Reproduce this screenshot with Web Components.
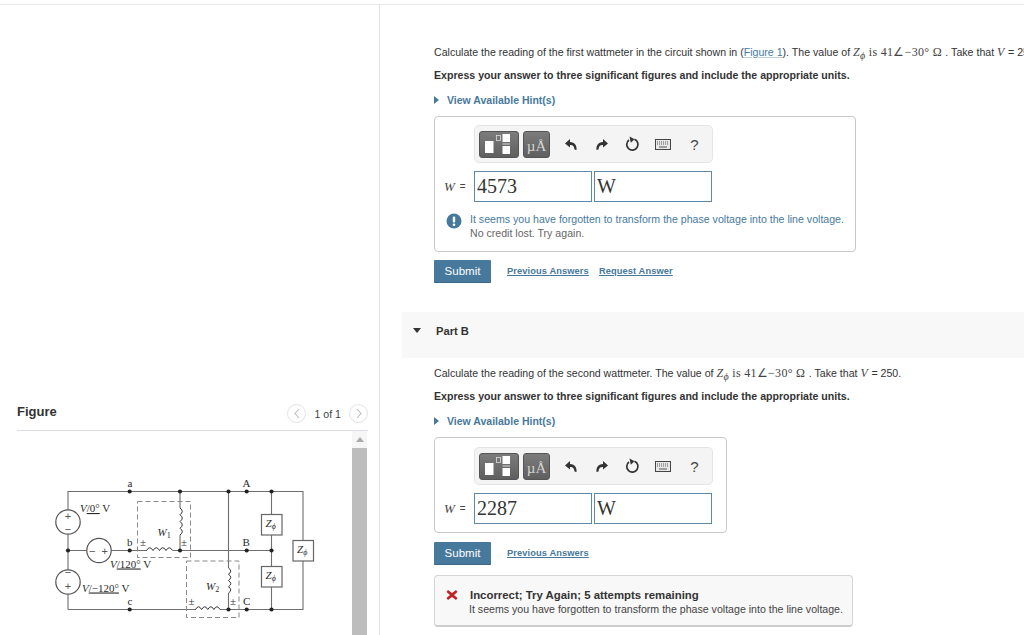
<!doctype html>
<html>
<head>
<meta charset="utf-8">
<style>
  html, body { margin: 0; height: 635px; overflow: hidden; background: #fff; }
  body { font-family: "Liberation Sans", Arial, sans-serif; font-size: 10.6px; color: #333; }
</style>
</head>
<body>
<mastering-page>
  <figure-pane slot="figure"><circuit-diagram></circuit-diagram></figure-pane>

  <question-line slot="parts">Calculate the reading of the first wattmeter in the circuit shown in (<a href="#">Figure 1</a>). The value of <math-text><i>Z<sub>ϕ</sub></i> is 41∠−30° Ω</math-text>. Take that <math-text><i>V</i></math-text> = 250.</question-line>
  <question-line slot="parts" bold>Express your answer to three significant figures and include the appropriate units.</question-line>
  <hint-toggle slot="parts"></hint-toggle>
  <answer-box slot="parts" value="4573" unit="W" style="width:422px;height:136px">
    <warning-note>
      <span slot="title">It seems you have forgotten to transform the phase voltage into the line voltage.</span>
      No credit lost. Try again.
    </warning-note>
  </answer-box>
  <submit-row slot="parts" request style="margin-top:8px"></submit-row>

  <part-header slot="parts">Part B</part-header>
  <question-line slot="parts" style="margin-top:4px">Calculate the reading of the second wattmeter. The value of <math-text><i>Z<sub>ϕ</sub></i> is 41∠−30° Ω</math-text>. Take that <math-text><i>V</i></math-text> = 250.</question-line>
  <question-line slot="parts" bold>Express your answer to three significant figures and include the appropriate units.</question-line>
  <hint-toggle slot="parts"></hint-toggle>
  <answer-box slot="parts" value="2287" unit="W" style="width:293px;height:96px;padding-top:9px"></answer-box>
  <submit-row slot="parts" style="margin-top:9px"></submit-row>
  <incorrect-note slot="parts" style="margin-top:10px">
    <span slot="title">Incorrect; Try Again; 5 attempts remaining</span>
    It seems you have forgotten to transform the phase voltage into the line voltage.
  </incorrect-note>
</mastering-page>

<script>
const BLUE = "#47799d";

// small helper so every element below stays a few lines long
function define(name, html) {
  customElements.define(name, class extends HTMLElement {
    constructor() {
      super();
      this.attachShadow({ mode: "open" });
      this.shadowRoot.innerHTML = typeof html === "function" ? html(this) : html;
    }
  });
}

define("mastering-page", `
  <style>
    :host { display: flex; height: 630px; margin-top: 4px; border-top: 1px solid #e8e8e8; overflow: hidden; }
    .left { flex: 0 0 379px; border-right: 1px solid #dfe3e8; }
    .right { flex: 1; min-width: 0; padding-top: 36px; overflow: hidden; }
    ::slotted(question-line), ::slotted(hint-toggle), ::slotted(answer-box),
    ::slotted(submit-row), ::slotted(incorrect-note) { margin-left: 54px; }
  </style>
  <div class="left"><slot name="figure"></slot></div>
  <div class="right"><slot name="parts"></slot></div>
`);

define("figure-pane", `
  <style>
    :host { display: block; padding: 394px 11px 0 17px; overflow: hidden; }
    header { display: flex; align-items: center; height: 32px; border-bottom: 1px solid #d9dde2; box-sizing: border-box; }
    h2 { flex: 1; margin: 0; font-size: 13px; font-weight: bold; color: #333; position: relative; top: -3px; }
    .pager { display: flex; align-items: center; gap: 8px; font-size: 10.600px; color: #444; position: relative; top: -1px; }
    .round { width: 19px; height: 19px; border: 1px solid #e3e3e3; border-radius: 50%; box-sizing: border-box; display: grid; place-items: center; }
    .body { display: flex; height: 205px; }
    .canvas { flex: 1; min-width: 0; }
    .track { width: 15px; margin-right: 1px; background: #f4f4f4; display: flex; flex-direction: column; }
    .up { height: 17px; display: grid; place-items: center; background: #f6f6f6; }
    .up i { border: 4px solid transparent; border-top: 0; border-bottom: 5px solid #aaa; }
    .thumb { flex: 1; background: #bdbdbd; }
  </style>
  <header>
    <h2>Figure</h2>
    <div class="pager">
      <span class="round"><svg width="8" height="11" viewBox="0 0 8 11"><path d="M6 1L2 5.500 6 10" fill="none" stroke="#bbb" stroke-width="1.100"/></svg></span>
      <span>1 of 1</span>
      <span class="round"><svg width="8" height="11" viewBox="0 0 8 11"><path d="M2 1l4 4.500L2 10" fill="none" stroke="#bbb" stroke-width="1.100"/></svg></span>
    </div>
  </header>
  <div class="body">
    <div class="canvas"><slot></slot></div>
    <div class="track"><div class="up"><i></i></div><div class="thumb"></div></div>
  </div>
`);

// coil made of n small humps, drawn along +x or +y
function coil(x, y, len, n, vertical) {
  const s = len / n;
  let d = `M${x} ${y}`;
  for (let i = 0; i < n; i++) {
    d += vertical ? `q4.500 ${s / 2} 0 ${s}` : `q${s / 2} -5.500 ${s} 0`;
  }
  return `<path d="${d}" class="coil"/>`;
}

function dots(list) {
  return list.map(([x, y]) => `<circle cx="${x}" cy="${y}" r="2.100" fill="#222"/>`).join("");
}

function zbox(x, y) {
  return `<rect x="${x}" y="${y}" width="20.500" height="20.500" fill="#fff" stroke="#666" stroke-width="1.200"/>
    <text x="${x + 4}" y="${y + 12}" class="it" font-size="12">Z<tspan font-size="8" dy="2">ϕ</tspan></text>`;
}

define("circuit-diagram", () => `
  <style>
    :host { display: block; }
    svg { display: block; margin-left: -17px; }
    .w { fill: none; stroke: #6e6e6e; stroke-width: 1.100; }
    .dash { fill: none; stroke: #888; stroke-width: 1; stroke-dasharray: 5 3; }
    .coil { fill: none; stroke: #333; stroke-width: 1; }
    text { font-family: "Liberation Serif", "Times New Roman", serif; font-size: 11px; fill: #2b2b2b; }
    .it { font-style: italic; }
    .u { text-decoration: underline; }
    .src { fill: #fff; stroke: #555; stroke-width: 1.200; }
    .sym { font-family: "Liberation Sans", sans-serif; font-size: 11px; fill: #555; }
  </style>
  <svg width="352" height="205" viewBox="0 431 352 205">
    <path class="w" d="M68 609.500V491.500H303V609.500H68M68 550.500H271.500M180 491.500V508M180 535V550.500M228.500 491.500V568M228.500 593V609.500M271.500 491.500V609.500"/>
    <path class="dash" d="M137.500 501.500H190.500V557.500H137.500Z"/>
    <path class="dash" d="M186.500 561H239V617.500H186.500Z"/>
    <circle class="src" cx="68" cy="522" r="12.200"/>
    <circle class="src" cx="99" cy="550.500" r="12.200"/>
    <circle class="src" cx="68" cy="582" r="12.200"/>
    <text class="sym" x="64.800" y="519.500">+</text><text class="sym" x="64.800" y="533">−</text>
    <text class="sym" x="89" y="554.500">−</text><text class="sym" x="101.500" y="554.500">+</text>
    <text class="sym" x="64.800" y="576">−</text><text class="sym" x="64.800" y="589.500">+</text>
    <rect x="147" y="547" width="26" height="7" fill="#fff"/>
    <rect x="196" y="605" width="24" height="7" fill="#fff"/>
    ${coil(146.500, 550.500, 26, 4, false)}
    ${coil(195.500, 609.500, 24.500, 4, false)}
    ${coil(180, 508, 27, 4, true)}
    ${coil(228.500, 568, 25, 4, true)}
    ${dots([[129.700, 491.500], [180, 491.500], [228.500, 491.500], [246.700, 491.500], [271.500, 491.500],
            [68, 550.500], [129.700, 550.500], [180, 550.500], [246.700, 550.500], [271.500, 550.500],
            [129.700, 609.500], [228.500, 609.500], [246.700, 609.500], [271.500, 609.500]])}
    ${zbox(261.500, 514.500)}${zbox(261.500, 566.500)}${zbox(293, 540.500)}
    <text x="127.500" y="487">a</text><text x="242.500" y="487" font-size="12">A</text>
    <text x="127" y="546">b</text><text x="242.500" y="546" font-size="12">B</text>
    <text x="127.500" y="605">c</text><text x="243" y="605" font-size="12">C</text>
    <text x="80" y="512"><tspan class="it">V</tspan><tspan class="u">/0°</tspan> V</text>
    <text x="110" y="567.500"><tspan class="it">V</tspan><tspan class="u">/120°</tspan> V</text>
    <text x="82" y="591.500"><tspan class="it">V</tspan><tspan class="u">/−120°</tspan> V</text>
    <text x="157.500" y="536" class="it">W<tspan font-size="8" dy="2" font-style="normal">1</tspan></text>
    <text x="206" y="590" class="it">W<tspan font-size="8" dy="2" font-style="normal">2</tspan></text>
    <text x="140" y="546" font-size="12">±</text><text x="181" y="546" font-size="12">±</text>
    <text x="188.500" y="605" font-size="12">±</text><text x="230" y="605" font-size="12">±</text>
  </svg>
`);

define("question-line", (el) => `
  <style>
    :host { display: block; height: 23px; line-height: 23px; white-space: nowrap; color: #333; font-weight: ${el.hasAttribute("bold") ? "bold" : "normal"}; }
    ::slotted(a) { color: #3f7ba5; text-decoration: underline; text-decoration-color: #b9d0e0; }
  </style>
  <slot></slot>
`);

define("math-text", `
  <style>
    :host { font-family: "Liberation Serif", "Times New Roman", serif; font-size: 12px; color: #444; letter-spacing: .3px; }
    ::slotted(i) { font-size: 12px; }
  </style>
  <slot></slot>
`);

define("hint-toggle", `
  <style>
    :host { display: flex; align-items: center; gap: 8px; height: 20px; margin-top: 3px; margin-bottom: 6px; color: ${BLUE}; font-weight: bold; font-size: 10.500px; }
    i { border: 4px solid transparent; border-left: 5px solid ${BLUE}; border-right: 0; }
  </style>
  <i></i><span>View Available Hint(s)</span>
`);

define("math-toolbar", `
  <style>
    :host { display: flex; align-items: center; width: 239px; height: 38px; box-sizing: border-box; background: #f4f4f4; border: 1px solid #e4e4e4; border-radius: 5px; padding-left: 4px; }
    .b { height: 27px; box-sizing: border-box; border: 1px solid #555; border-radius: 3px; background: linear-gradient(#7c7c7c, #5f5f5f); display: grid; place-items: center; }
    .t { width: 40px; margin-right: 4px; }
    .m { width: 27px; color: #d4d4d4; font: 15px/15px "Liberation Serif", serif; padding-top: 4px; }
    .tools { display: flex; align-items: center; color: #333; margin-left: 5px; }
    .tools > * { flex: 0 0 31px; display: grid; place-items: center; }
    .q { font: 15px "Liberation Sans", sans-serif; color: #444; }
  </style>
  <div class="b t"><svg width="32" height="22" viewBox="0 0 32 22">
    <rect x="2" y="8" width="8.500" height="12" fill="#fff"/>
    <rect x="13.500" y="2.500" width="4" height="5" fill="none" stroke="#ddd" stroke-width=".8"/>
    <rect x="19.500" y="1" width="7.500" height="8" fill="#fff"/>
    <rect x="19.500" y="10.500" width="7.500" height="1" fill="#ddd"/>
    <rect x="19.500" y="13" width="7.500" height="8" fill="#fff"/>
  </svg></div>
  <div class="b m"><span>µÅ</span></div>
  <div class="tools">
    <span><svg width="14" height="13" viewBox="0 0 14 13"><path d="M6 1L1 5.500 6 9.500V7c2.500-.3 4 .5 4.500 4.500L12.500 12c.5-4-1.500-8-6.500-8z" fill="#333"/></svg></span>
    <span><svg width="14" height="13" viewBox="0 0 14 13"><path d="M8 1L13 5.500 8 9.500V7C5.500 6.700 4 7.500 3.500 11.500L1.500 12C1 8 3 4 8 4z" fill="#333"/></svg></span>
    <span><svg width="15" height="16" viewBox="0 0 15 16"><path d="M9.500 3.300A5.600 5.600 0 1 1 4 4" fill="none" stroke="#333" stroke-width="1.700"/><path d="M4.500 .5L9.500 3.300 5.800 6.800z" fill="#333"/></svg></span>
    <span style="position:relative;left:-1px"><svg width="16" height="11" viewBox="0 0 16 11"><rect x=".5" y=".5" width="15" height="10" fill="#e8e8e8" stroke="#444"/><path d="M2 3h12M2 5h12" stroke="#555" stroke-dasharray="1 1"/><path d="M4 8h8" stroke="#555"/></svg></span>
    <span class="q">?</span>
  </div>
`);

define("answer-box", (el) => `
  <style>
    :host { display: block; box-sizing: border-box; border: 1px solid #c9c9c9; border-radius: 4px; padding: 8px 0 0 39px; }
    .row { display: flex; margin: 8px 0 0 -30px; align-items: stretch; }
    .label { width: 30px; font: 13px "Liberation Serif", serif; color: #444; display: flex; align-items: center; gap: 5px; }
    .input { width: 118px; height: 31px; box-sizing: border-box; border: 1px solid #5a8aa8; background: #fff; font: 20px/29px "Liberation Serif", serif; color: #333; padding-left: 2px; }
    .input + .input { margin-left: 2px; }
    .foot { margin-left: -30px; }
  </style>
  <math-toolbar></math-toolbar>
  <div class="row">
    <span class="label"><i>W</i><span style="font-family:'Liberation Sans';font-size:10px">=</span></span>
    <span class="input">${el.getAttribute("value")}</span>
    <span class="input">${el.getAttribute("unit")}</span>
  </div>
  <div class="foot"><slot></slot></div>
`);

define("warning-note", `
  <style>
    :host { display: flex; gap: 8px; margin: 10px 0 0 2px; line-height: 14px; color: #666; align-items: flex-start; }
    svg { flex: none; margin-top: 1px; }
    ::slotted([slot=title]) { color: ${BLUE}; white-space: nowrap; }
  </style>
  <svg width="16" height="16" viewBox="0 0 16 16"><circle cx="8" cy="8" r="7.500" fill="${BLUE}"/><rect x="6.800" y="3.500" width="2.400" height="6" rx="1" fill="#fff"/><circle cx="8" cy="11.700" r="1.300" fill="#fff"/></svg>
  <div><slot name="title"></slot><br><slot></slot></div>
`);

define("submit-row", (el) => `
  <style>
    :host { display: flex; align-items: center; height: 23px; }
    button { width: 57px; height: 23px; border: 0; border-bottom: 1px solid #3b6987; border-radius: 1px; background: ${BLUE}; color: #fff; font: 11.500px "Liberation Sans", sans-serif; padding: 0; }
    a { font-size: 9.300px; font-weight: bold; color: ${BLUE}; margin: 0 0 1px 16px; letter-spacing: .1px; }
    a + a { margin-left: 10px; }
  </style>
  <button>Submit</button>
  <a href="#">Previous Answers</a>${el.hasAttribute("request") ? '<a href="#">Request Answer</a>' : ""}
`);

define("part-header", `
  <style>
    :host { display: flex; align-items: flex-start; height: 46px; margin: 29px 0 0 22px; background: #f8f8f8; font-size: 11.200px; font-weight: bold; color: #333; line-height: 12px; padding-top: 13px; box-sizing: border-box; }
    i { border: 4px solid transparent; border-top: 5px solid #333; border-bottom: 0; margin: 3px 15px 0 11px; }
  </style>
  <i></i><slot></slot>
`);

define("incorrect-note", `
  <style>
    :host { display: flex; width: 419px; height: 52px; box-sizing: border-box; background: #f8f8f8; border: 1px solid #d5d5d5; border-bottom: 2px solid #ccc; border-radius: 4px; padding: 12px 0 0 11px; line-height: 14px; }
    svg { flex: none; margin: 1px 11px 0 0; }
    ::slotted([slot=title]) { display: block; font-weight: bold; font-size: 11.400px; color: #333; margin-left: 1px; }
    .text { color: #444; white-space: nowrap; }
  </style>
  <svg width="12" height="12" viewBox="0 0 12 12"><path d="M2 1l4 3 4-3 1.500 2-3.500 3 3.500 3-1.500 2-4-3-4 3L.5 9 4 6 .5 3z" fill="#c32026"/></svg>
  <div class="text"><slot name="title"></slot><slot></slot></div>
`);
</script>
</body>
</html>
